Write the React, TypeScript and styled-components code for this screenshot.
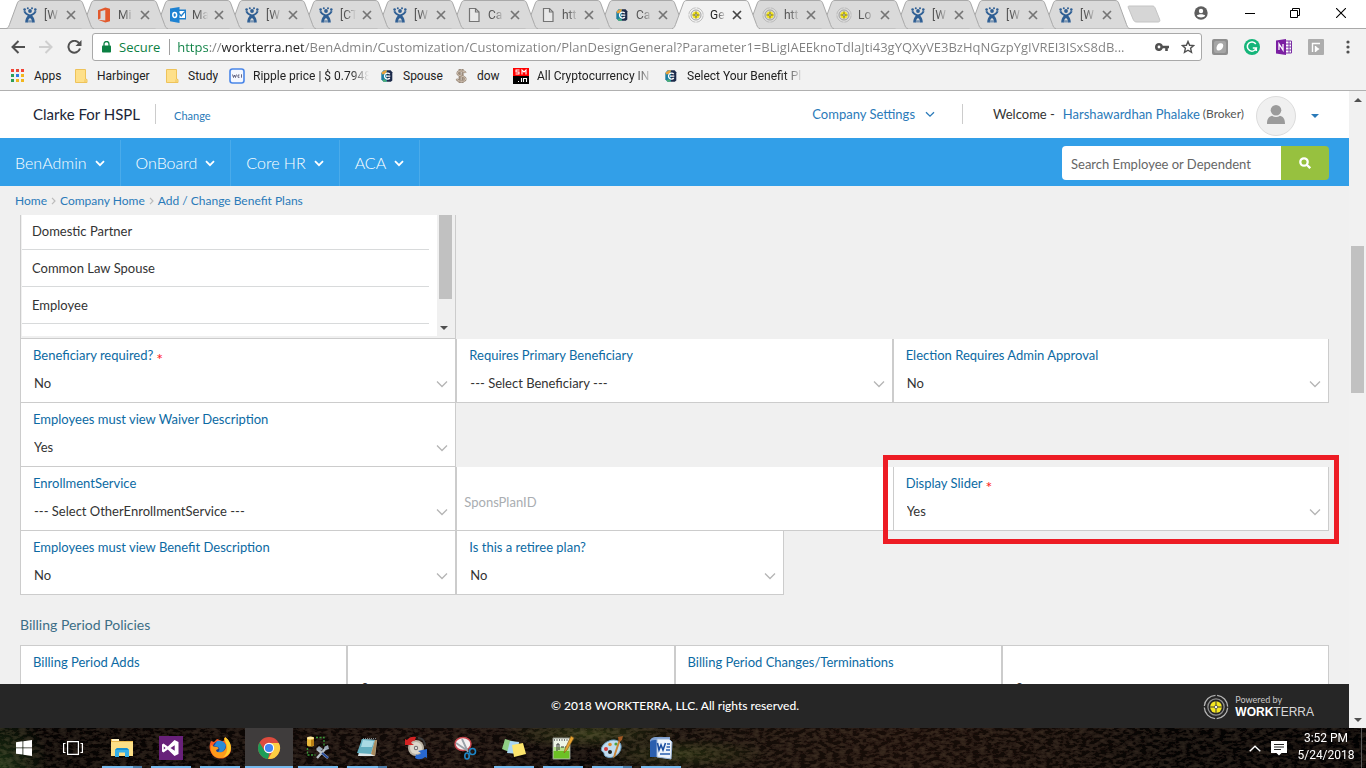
import React from "react";
import styled, { createGlobalStyle, css } from "styled-components";

const GlobalStyle = createGlobalStyle`
  * { box-sizing: border-box; }
  body { margin: 0; background: #f0f0f0; }
  button, input, select { font: inherit; color: inherit; margin: 0; }
  button { border: 0; padding: 0; background: none; cursor: pointer; }
  a { text-decoration: none; color: inherit; }
  svg { display: block; flex: none; }
`;

const uiFont = 'Roboto, "Open Sans", sans-serif';
const pageFont = 'Lato, "Open Sans", sans-serif';
const line = "#cccccc";
const link = "#2a7ab9";

/* ---------- window ---------- */

const Desktop = styled.div`
  display: flex;
  flex-direction: column;
  height: 100vh;
  overflow: hidden;
  font-family: ${uiFont};
`;

const TitleBar = styled.div`
  display: flex;
  height: 29px;
  flex: none;
  background: #fff;
  border-bottom: 1px solid #a9a9a9;
  padding-left: 12px;
`;

const Tab = styled.div<{ $active?: boolean; $order: number }>`
  position: relative;
  z-index: ${(p) => (p.$active ? 40 : p.$order)};
  display: flex;
  align-items: center;
  width: 74px;
  height: 29px;
  flex: none;
  padding-left: 10px;
  color: ${(p) => (p.$active ? "#222" : "#555")};
`;

const TabShape = styled.svg`
  position: absolute;
  left: -6px;
  top: 0;
  z-index: -1;
`;

const TabTitle = styled.button`
  display: flex;
  align-items: center;
  gap: 6px;
  width: 38px;
  overflow: hidden;
  font-size: 12px;
  line-height: 16px;
  white-space: nowrap;
  mask-image: linear-gradient(90deg, #000 28px, transparent 38px);
`;

const TabClose = styled.button`
  display: flex;
  align-items: center;
  justify-content: center;
  width: 22px;
  height: 16px;
`;

const NewTab = styled.button`
  display: flex;
  align-items: center;
  padding-left: 4px;
`;

const WindowButtons = styled.div`
  display: flex;
  align-items: center;
  margin-left: auto;
  padding-right: 1px;
  height: 26px;
`;

const WindowButton = styled.button<{ $w: number }>`
  display: flex;
  align-items: center;
  justify-content: center;
  width: ${(p) => p.$w}px;
  height: 26px;
`;

const Toolbar = styled.div`
  display: flex;
  align-items: center;
  flex: none;
  height: 36px;
  background: #f2f2f2;
  padding: 0 2px 0 4px;
`;

const ToolButton = styled.button<{ $w?: number }>`
  display: flex;
  align-items: center;
  justify-content: center;
  flex: none;
  width: ${(p) => p.$w ?? 28}px;
  height: 28px;
`;

const AddressBox = styled.div`
  display: flex;
  align-items: center;
  flex: 1;
  min-width: 0;
  height: 28px;
  margin-left: 4px;
  margin-right: 2px;
  background: #fff;
  border: 1px solid #a9a9a9;
  border-radius: 3px;
`;

const Secure = styled.span`
  display: flex;
  align-items: center;
  gap: 8px;
  padding: 0 9px;
  color: #0b8043;
  border-right: 1px solid #a0a0a0;
  font-family: "Open Sans", sans-serif;
  font-size: 13px;
  line-height: 16px;
`;

const AddressInput = styled.input`
  flex: 1;
  min-width: 0;
  border: 0;
  outline: 0;
  padding: 0;
  margin-left: 7px;
  height: 24px;
  font-family: "Open Sans", sans-serif;
  font-size: 13px;
  color: transparent;
  background: linear-gradient(
    90deg,
    #0b8043 31px,
    #808080 31px,
    #808080 45px,
    #222 45px,
    #222 127px,
    #808080 127px
  );
  background-clip: text;
  -webkit-background-clip: text;
`;

const Bookmarks = styled.nav`
  display: flex;
  align-items: center;
  flex: none;
  height: 26px;
  padding: 0 10px 4px;
  background: #f2f2f2;
  border-bottom: 1px solid #b0b0b0;
  font-size: 12px;
  line-height: 16px;
  color: #222;
`;

const Bookmark = styled.a<{ $w: number; $fade?: boolean }>`
  display: flex;
  align-items: center;
  gap: 8px;
  width: ${(p) => p.$w}px;
  padding-right: ${(p) => (p.$fade ? 10 : 6)}px;
  flex: none;
  white-space: nowrap;
  span {
    overflow: hidden;
    ${(p) =>
      p.$fade &&
      css`
        flex: 1;
        mask-image: linear-gradient(90deg, #000 84%, transparent);
      `}
  }
`;

/* ---------- web page ---------- */

const Viewport = styled.div`
  display: flex;
  flex: 1;
  min-height: 0;
`;

const Page = styled.div`
  display: flex;
  flex-direction: column;
  flex: 1;
  min-width: 0;
  background: #f0f0f0;
  font-family: ${pageFont};
  font-size: 13px;
  line-height: 20px;
  color: #333;
`;

const Scrollbar = styled.div`
  display: flex;
  flex-direction: column;
  align-items: center;
  flex: none;
  width: 17px;
  background: #f1f1f1;
`;

const ScrollButton = styled.button`
  display: flex;
  align-items: center;
  justify-content: center;
  width: 17px;
  height: 17px;
`;

const ScrollTrack = styled.div`
  flex: 1;
  width: 13px;
  padding-top: 138px;
`;

const ScrollThumb = styled.div<{ $h: number }>`
  width: 13px;
  height: ${(p) => p.$h}px;
  background: #c1c1c1;
`;

const Header = styled.header`
  display: flex;
  align-items: center;
  flex: none;
  height: 47px;
  padding: 0 21px 2px 33px;
  background: #fff;
`;

const Company = styled.span`
  font-size: 15px;
  color: #1c2536;
`;

const Divider = styled.span<{ $before: number; $after: number }>`
  width: 1px;
  height: 20px;
  background: ${line};
  margin: 0 ${(p) => p.$after}px 0 ${(p) => p.$before}px;
`;

const HeaderLink = styled.a`
  display: flex;
  align-items: center;
  gap: 10px;
  color: ${link};
`;

const SmallLink = styled(HeaderLink)`
  font-size: 11px;
  padding-top: 4px;
`;

const Account = styled.div`
  display: flex;
  align-items: center;
  margin-left: auto;
`;

const Welcome = styled.span`
  margin-right: 8px;
`;

const Role = styled.span`
  font-size: 12px;
  color: #555;
  margin: 0 12px 0 3px;
`;

const Avatar = styled.span`
  display: flex;
  align-items: center;
  justify-content: center;
  width: 40px;
  height: 40px;
  margin-top: 5px;
  padding-bottom: 3px;
  border: 1px solid #dcdcdc;
  border-radius: 50%;
  background: #f0f0f0;
`;

const Caret = styled.button`
  display: flex;
  justify-content: center;
  width: 26px;
  margin: 4px 0 0 6px;
`;

const MainNav = styled.nav`
  display: flex;
  align-items: center;
  flex: none;
  height: 48px;
  padding-right: 20px;
  background: #329fe8;
`;

const NavItem = styled.button`
  display: flex;
  align-items: center;
  gap: 8px;
  height: 46px;
  margin-top: 2px;
  padding: 0 15px;
  border-right: 1px solid #4aabea;
  color: #fff;
  font-size: 16px;
  font-weight: 300;
  line-height: 20px;
`;

const Search = styled.form`
  display: flex;
  width: 267px;
  height: 34px;
  margin: 2px 0 0 auto;
  border-radius: 4px;
  overflow: hidden;
`;

const SearchInput = styled.input`
  flex: 1;
  min-width: 0;
  border: 0;
  padding: 2px 9px 0;
  background: #fff;
  &::placeholder { color: #666; opacity: 1; }
`;

const SearchButton = styled.button`
  display: flex;
  align-items: center;
  justify-content: center;
  width: 48px;
  background: #97c13f;
`;

const Crumbs = styled.nav`
  display: flex;
  align-items: center;
  flex: none;
  gap: 4px;
  height: 29px;
  padding: 0 15px;
  font-size: 12px;
  color: ${link};
`;

const Content = styled.main`
  flex: 1;
  min-height: 0;
  overflow: hidden;
  padding: 0 20px;
`;

const ListBox = styled.div`
  display: flex;
  width: calc(100% / 3);
  height: 126px;
  margin-top: -2px;
  padding: 0 3px 2px 1px;
  border: 1px solid ${line};
  border-top: 0;
`;

const ListItems = styled.ul`
  flex: 1;
  margin: 0;
  padding: 0 8px 0 0;
  overflow: hidden;
  list-style: none;
  background: #fff;
`;

const ListItem = styled.li`
  height: 37px;
  padding: 8px 10px 0;
  border-bottom: 1px solid #d8dadb;
`;

const ListScroll = styled.div`
  display: flex;
  flex-direction: column;
  align-items: flex-end;
  justify-content: space-between;
  width: 15px;
`;

const Row = styled.div`
  display: flex;
`;

const Field = styled.div<{ $quarter?: boolean; $marked?: boolean }>`
  position: relative;
  width: ${(p) => (p.$quarter ? "25%" : "calc(100% / 3)")};
  height: 64px;
  padding: 6px 7px 0 12px;
  background: #fff;
  border: 1px solid ${line};
  border-top: 0;
  ${(p) =>
    p.$marked &&
    css`
      &::after {
        content: "";
        position: absolute;
        inset: -12px -11px -14px;
        border: 5px solid #ed1c24;
        pointer-events: none;
      }
    `}
`;

const PlainField = styled(Field)`
  display: flex;
  align-items: center;
  border-right: 0;
  padding: 7px 7px 0;
`;

const PlanInput = styled.input`
  width: 100%;
  border: 0;
  padding: 0;
  background: none;
  &::placeholder { color: #a9adb1; opacity: 1; }
`;

const Label = styled.label`
  display: block;
  height: 20px;
  color: #0c6aa3;
`;

const Required = styled.span`
  color: #ff2020;
  font-size: 16px;
  line-height: 12px;
  vertical-align: -5px;
  margin-left: 3px;
`;

const SelectWrap = styled.div`
  display: flex;
  align-items: center;
  margin-top: 8px;
`;

const Select = styled.select`
  flex: 1;
  min-width: 0;
  appearance: none;
  border: 0;
  outline: 0;
  background: none;
  height: 20px;
  padding: 0 1px;
  margin-right: -12px;
`;

const GroupTitle = styled.h2`
  margin: 20px 0 10px;
  font-size: 14px;
  line-height: 20px;
  font-weight: 400;
  color: #3c6e86;
`;

const BillingRow = styled(Row)`
  border-top: 1px solid ${line};
`;

const UnlabelledField = styled(Field)`
  padding-top: 24px;
`;

const Footer = styled.footer`
  display: grid;
  grid-template-columns: 1fr auto 1fr;
  align-items: center;
  flex: none;
  height: 44px;
  padding: 0 35px 0 36px;
  background: #262626;
  color: #fff;
  font-size: 12px;
`;

const Copyright = styled.span`
  grid-column: 2;
  font-weight: 500;
`;

const Powered = styled.a`
  display: flex;
  align-items: center;
  justify-self: end;
  gap: 6px;
  padding-top: 2px;
`;

const BrandText = styled.span`
  display: flex;
  flex-direction: column;
  font-family: "Liberation Sans", Arial, sans-serif;
  small { font-family: ${pageFont}; font-size: 9px; line-height: 10px; color: #c8c8c8; }
  span { font-size: 12px; line-height: 14px; color: #d8d8d8; }
  b { color: #fff; }
`;

/* ---------- task bar ---------- */

const Taskbar = styled.div`
  position: relative;
  isolation: isolate;
  display: flex;
  flex: none;
  height: 40px;
  color: #fff;
  background:
    radial-gradient(ellipse 50px 60px at 0 40px, #1b3013, transparent),
    radial-gradient(ellipse 90px 16px at 590px 6px, #2c3214, transparent),
    radial-gradient(ellipse 90px 16px at 680px 26px, #252b10, transparent),
    linear-gradient(90deg, #040302 0, #0a0604 14%, #120b08 34%, #080504 42%, #130d08 52%, #170d08 66%, #100a06 78%, #050403 86%, #020202 100%);
`;

const Foliage = styled.svg`
  position: absolute;
  inset: 0;
  z-index: -1;
  width: 100%;
  height: 100%;
  opacity: 0.25;
  mix-blend-mode: screen;
`;

const TaskButton = styled.button<{ $active?: boolean }>`
  position: relative;
  display: flex;
  align-items: center;
  justify-content: center;
  width: 48px;
  height: 40px;
  margin-right: 1px;
  flex: none;
  background: ${(p) => (p.$active ? "#3f3c3c" : "none")};
`;

const RunningBar = styled.span<{ $kind: "one" | "many" | "active" }>`
  position: absolute;
  bottom: 0;
  left: ${(p) => (p.$kind === "active" ? 0 : 4)}px;
  right: ${(p) => (p.$kind === "active" ? 0 : 4)}px;
  height: 2px;
  background: ${(p) => (p.$kind === "many" ? "linear-gradient(90deg, #76b9ed 31px, #4a7ba6 31px)" : "#76b9ed")};
`;

const Tray = styled.div`
  display: flex;
  align-items: center;
  margin-left: auto;
  padding-right: 4px;
`;

const TrayButton = styled.button`
  display: flex;
  align-items: center;
  justify-content: center;
  width: 24px;
  height: 40px;
`;

const Clock = styled.div`
  width: 70px;
  padding-bottom: 2px;
  text-align: center;
  font-size: 12px;
  line-height: 17px;
  white-space: nowrap;
`;

const ShowDesktop = styled.span`
  width: 1px;
  height: 40px;
  background: #555;
`;

/* ---------- icons ---------- */

const Jira = () => (
  <svg width="16" height="16" viewBox="0 0 16 16" fill="#2f5f94">
    <circle cx="2.6" cy="2.6" r="1.3" /><circle cx="5.8" cy="1.3" r="1" /><circle cx="10" cy="1.3" r="1" />
    <circle cx="13.3" cy="2.6" r="1.3" /><circle cx="8" cy="4" r="1.9" />
    <path d="M1.4 4.6c1 2.4 3 3.4 4.4 4.2C4.300 10.300 3.300 12.600 3.200 15.400H5.700c.2-2 .9-3.400 2.300-4.300 1.400.9 2.100 2.300 2.300 4.300h2.500c-.1-2.800-1.100-5.100-2.600-6.600 1.400-.8 3.400-1.800 4.400-4.200l-2-.5C11.900 6 10 7.200 8 7.400 6 7.200 4.100 6 3.400 4.100z" />
    <path d="M5.600 13.200h4.800l.6 2.400H5z" opacity=".55" />
  </svg>
);
const Office = () => (
  <svg width="16" height="16" viewBox="0 0 16 16"><path d="M2 3.300 9.300.5 14 1.800v12.400l-4.700 1.300L2 12.700l7.300.9V3.100L4.500 4.200v7.300L2 12.600z" fill="#e2592c" /></svg>
);
const Outlook = () => (
  <svg width="16" height="16" viewBox="0 0 16 16">
    <path d="M8 2.500h8v10H8z" fill="#1f7ecb" /><path d="M9 4h6v7H9z" fill="#fff" /><path d="m9 6.500 2.200 2.500L15 4.500" fill="none" stroke="#1f7ecb" strokeWidth="1.300" />
    <path d="M0 1.500 9.500 0v16L0 14.300z" fill="#1e82d2" /><ellipse cx="4.700" cy="8" rx="1.900" ry="2.500" fill="none" stroke="#fff" strokeWidth="1.500" />
  </svg>
);
const Doc = () => (
  <svg width="16" height="16" viewBox="0 0 16 16" fill="#e8e8e8" stroke="#747474" strokeWidth="1.200"><path d="M3.500 1.500h6l3.500 3.500v9.500H3.500z" /><path d="M9.500 1.500V5H13" fill="none" /></svg>
);
const Globe = () => (
  <svg width="16" height="16" viewBox="0 0 16 16">
    <path d="M8 2.300H4.500L2.300 5v6.500l2.200 2.200H8z" fill="#1e7ea0" /><path d="M2.500 4.500 6 2.300h2L7 5.500l-3.600 1z" fill="#e9a23b" />
    <path d="M8 2.300h3.600l1.700 1.900v8.300l-1.500 1.200H8z" fill="#1c2b4b" />
    <path d="M10.800 6.100A3 3 0 1 0 10.800 10M7 8.100h4.300" fill="none" stroke="#fff" strokeWidth="1.300" /><path d="M3.500 12 6 11.300l2 2.400H4.500z" fill="#4cae73" />
  </svg>
);
const Target = ({ size = 16 }: { size?: number }) => (
  <svg width={size} height={size} viewBox="0 0 16 16">
    <circle cx="8" cy="8" r="7.200" fill="none" stroke="#b4b4b4" strokeWidth=".8" strokeDasharray="10.300 1" strokeDashoffset="-.5" />
    <circle cx="8" cy="8" r="5" fill="none" stroke="#8f8f8f" strokeWidth=".8" />
    <circle cx="8" cy="8" r="3.600" fill="#f5e722" /><path d="M8 4.400v7.200M4.400 8h7.200" stroke="#333" strokeWidth=".6" />
    <circle cx="8" cy="8" r="1" fill="#fff" stroke="#333" strokeWidth=".4" />
  </svg>
);
const Apps = () => (
  <svg width="16" height="16" viewBox="0 0 16 16">
    {["#f44336", "#e64a3a", "#f44336", "#2e9e57", "#2f7be4", "#f2b61c", "#2e9e57", "#f2b61c", "#f2b61c"].map((c, i) => (
      <rect key={i} x={1 + (i % 3) * 5} y={1 + Math.floor(i / 3) * 5} width="3" height="3" fill={c} />
    ))}
  </svg>
);
const Folder = () => (
  <svg width="16" height="16" viewBox="0 0 16 16"><path d="M2.500 1.500h10v9.500l1.500.5v3H2.500z" fill="#fee08a" stroke="#eec35a" /><path d="M12 11.500v3" stroke="#eec35a" /></svg>
);
const Wci = () => (
  <svg width="16" height="16" viewBox="0 0 16 16"><rect x="1" y="1" width="14" height="14" rx="2.500" fill="#f5f8ff" stroke="#4a86e8" strokeWidth="1.600" /><path d="m3.500 6.500 1 3 1-2.500 1 2.500 1-3M10.500 7H9v2.300h1.500M12.500 6.300v3.400" fill="none" stroke="#446" strokeWidth=".8" /></svg>
);
const Dollar = () => (
  <svg width="16" height="16" viewBox="0 0 16 16" fill="none"><path d="M12.500 5C12 2.500 4.500 2 4.500 5.300S12.500 7.500 12.500 11 4.300 13.700 3.800 10.800M6.700 1v14M9.500 1v14" stroke="#9a8a7a" strokeWidth="2.200" /><path d="M12.500 5C12 2.500 4.500 2 4.500 5.300S12.500 7.500 12.500 11 4.300 13.700 3.800 10.800" stroke="#dccdbd" strokeWidth=".9" /></svg>
);
const SmIn = () => (
  <svg width="16" height="16" viewBox="0 0 16 16"><path fill="#f00" d="M0 0h16v8H0z" /><path fill="#000" d="M0 8h16v8H0z" /><path d="M6.500 2H3v2h3v2H2.500M9 6.500V2l2 2 2-2v4.500M5 13.500h1M8.500 10v4M10.500 14v-3.500h3V14" stroke="#fff" fill="none" strokeWidth="1.100" /></svg>
);
const Chevron = ({ w = 10, color = "#fff", sw = 1.6 }: { w?: number; color?: string; sw?: number }) => (
  <svg width={w} height={w} viewBox="0 0 10 10" fill="none" stroke={color} strokeWidth={sw}><path d="m1 3.200 4 4 4-4" /></svg>
);
const SelectArrow = () => (
  <svg width="12" height="12" viewBox="0 0 12 12" fill="none" stroke="#b5b5b5" strokeWidth="1.300" pointerEvents="none"><path d="m1 4.500 5 5 5-5" /></svg>
);
const Triangle = ({ up, color = "#505050" }: { up?: boolean; color?: string }) => (
  <svg width="8" height="4" viewBox="0 0 8 4" fill={color}><path d={up ? "M0 4h8L4 0z" : "M0 0h8L4 4z"} /></svg>
);

/* ---------- data ---------- */

const tabs: { icon: React.ReactNode; title: string; active?: boolean }[] = [
  { icon: <Jira />, title: "[W" }, { icon: <Office />, title: "Mi" }, { icon: <Outlook />, title: "Ma" },
  { icon: <Jira />, title: "[W" }, { icon: <Jira />, title: "[CT" }, { icon: <Jira />, title: "[W" },
  { icon: <Doc />, title: "Ca" }, { icon: <Doc />, title: "htt" }, { icon: <Globe />, title: "Ca" },
  { icon: <Target />, title: "Ge", active: true }, { icon: <Target />, title: "htt" }, { icon: <Target />, title: "Lo" },
  { icon: <Jira />, title: "[W" }, { icon: <Jira />, title: "[W" }, { icon: <Jira />, title: "[W" },
];

const bookmarks = [
  { icon: <Apps />, text: "Apps", w: 63 },
  { icon: <Folder />, text: "Harbinger", w: 91 },
  { icon: <Folder />, text: "Study", w: 65 },
  { icon: <Wci />, text: "Ripple price | $ 0.7948", w: 150, fade: true },
  { icon: <Globe />, text: "Spouse", w: 74 },
  { icon: <Dollar />, text: "dow", w: 60 },
  { icon: <SmIn />, text: "All Cryptocurrency IN", w: 150, fade: true },
  { icon: <Globe />, text: "Select Your Benefit Pl", w: 150, fade: true },
];

const taskIcons: { name: string; run?: "one" | "many" | "active"; icon: React.ReactNode }[] = [
  { name: "Start", icon: <svg width="16" height="16" viewBox="0 0 16 16" fill="#fff"><path d="M0 2.200 6.500 1.300v6.200H0zM7.300 1.200 16 0v7.500H7.300zM0 8.300h6.500v6.300L0 13.700zM7.300 8.300H16V16l-8.700-1.200z" /></svg> },
  { name: "Task view", icon: <svg width="20" height="14" viewBox="0 0 20 14" fill="none" stroke="#fff" strokeWidth="1.200"><path d="M4.600.6h10.800v12.800H4.600zM2.500 2.500H.6v9h1.900M17.500 2.500h1.900v9h-1.900" /></svg> },
  { name: "File Explorer", run: "many", icon: <svg width="24" height="22" viewBox="0 0 24 22"><path d="M1 2h7l1.500 2H23v15H1z" fill="#e9b94f" /><path d="M2 2h7v2H2z" fill="#fff3c4" /><path d="M1 5h22v14H1z" fill="#fcdf86" /><path d="M5 20v-7l2-2h10l2 2v7h-4v-4.500H9V20z" fill="#35b1ea" /><path d="M7 11h10l2 2H5z" fill="#1790d0" /></svg> },
  { name: "Visual Studio", run: "one", icon: <svg width="24" height="24" viewBox="0 0 24 24"><path d="M0 0h24v24H0z" fill="#68217a" /><path fillRule="evenodd" d="m3 8.500 1.500-.9 4.300 3 6.700-6.600L19.500 6v12l-4 2-6.700-6.600-4.300 3L3 15.500zm1.800 1.900v3.200L6.600 12zm10.900-1.200L11.500 12l4.200 2.800z" fill="#fff" /></svg> },
  { name: "Firefox", run: "one", icon: <svg width="24" height="24" viewBox="0 0 24 24"><path d="M3 5c-3 6-1 13 4 16 6 3.500 13 1 15.500-5C24 11 22 5 17 1c1 3-1 4-3 4L9 3 6 6z" fill="#ff5a1f" /><circle cx="11.500" cy="12" r="7" fill="#1c3f94" /><path d="M9 5c4-1 7 0 9 4-1 6-5 9-9 8 3-2 3-5 1-6L6 10z" fill="#2a8bd8" /><path d="M3 9c2 1 3 2 6 2 2 .5 2 2 0 2.500-1.500.5-1 2 .5 2.500 5 1.500 9-2 8.500-7-.3-3-2.500-4.500-2-7.500C22 6 23.500 11 21.500 16 19 22 11 24 6 20 3 17 2 13 3 9z" fill="#ff9a1a" /><path d="M17 1c4.500 3 7 8 5.500 14-1.500 4-4.500 6-7.500 6.500C20 17 20 11 18 7c-1-2-1.500-4-1-6z" fill="#ffd02e" /></svg> },
  { name: "Chrome", run: "active", icon: <svg width="24" height="24" viewBox="0 0 24 24"><circle cx="12" cy="12" r="11" fill="#dd4b3e" /><path d="M2.500 6.500 8 15.500l4.500 1L11 23A11 11 0 0 1 2.500 6.500z" fill="#1c9d57" /><path d="M12 7h9.800A11 11 0 0 1 11 23l5.500-9z" fill="#fdce42" /><circle cx="12" cy="12" r="5.200" fill="#fff" /><circle cx="12" cy="12" r="4.100" fill="#4285f4" /></svg> },
  { name: "SQL Server tools", run: "one", icon: <svg width="24" height="24" viewBox="0 0 24 24"><path d="M1 2v7c0 2 7 2 7 0V2z" fill="#e9b93a" /><path d="M5 2v8c1.500 0 3-.4 3-1V2z" fill="#b97e14" /><ellipse cx="4.500" cy="2" rx="3.500" ry="1.500" fill="#ffe89a" /><path d="M10 1.500h8v8M1.500 12v7h8" fill="none" stroke="#3a9a3a" strokeWidth="1.300" strokeDasharray="2 1.500" /><path d="m11 13 11 9M21 11 11 22" stroke="#b8c0c8" strokeWidth="2.400" /><path d="m10 13 3-3 4 3-2 2M18 11l4-2 1 4-3 1" fill="#9ba9b7" /><path d="m16 17 6 5" stroke="#2a4d9a" strokeWidth="2" /></svg> },
  { name: "Notepad", run: "many", icon: <svg width="24" height="24" viewBox="0 0 24 24"><path d="m7 3 15 1-2 16-17 0z" fill="#dce6e9" /><path d="m7 3 13 1-4 14-14-1z" fill="#63aebf" /><path d="m8 4 11 1-2 6-11 0z" fill="#a9dae4" /><path d="M8 2.500h13" stroke="#7b8286" strokeDasharray="1 1" /><path d="m16 18 4 2 2-16-2 0z" fill="#a88a5e" /></svg> },
  { name: "Sync", icon: <svg width="24" height="24" viewBox="0 0 24 24"><circle cx="12" cy="12" r="8" fill="#b9b2a4" /><circle cx="12" cy="12" r="6" fill="#ddd8cc" /><circle cx="12" cy="12" r="2.200" fill="#777" /><circle cx="12" cy="12" r="1" fill="#fff" /><path d="M1 3l2 1C5 1 9 0 12 1l-1 3.500C9 4.500 7.500 5.500 7 7l3 2H1z" fill="#d12222" /><path d="M23 22l-2-1c-3 2.500-7 3-10 1l1-3.500c2 .5 4 0 5-1.500l-3-2 9-2z" fill="#2868d0" /><path d="M14 2c5 0 7 4 7 8" fill="none" stroke="#3a3a3a" strokeWidth="2" /></svg> },
  { name: "Snipping tool", icon: <svg width="24" height="24" viewBox="0 0 24 24"><ellipse cx="10" cy="8" rx="8" ry="6.500" fill="#f4f0f0" stroke="#c8484f" strokeWidth="1.500" /><path d="M3 7l12 8M9 3l6 13" stroke="#9aa1a8" strokeWidth="1.800" /><circle cx="19.500" cy="15.500" r="3" fill="none" stroke="#1e86c8" strokeWidth="1.600" /><ellipse cx="14" cy="20" rx="2.200" ry="3" fill="none" stroke="#1e86c8" strokeWidth="1.600" /></svg> },
  { name: "Sticky notes", run: "one", icon: <svg width="24" height="24" viewBox="0 0 24 24"><path d="m3 3 10 3-3 11L0 13z" fill="#8fce84" /><path d="m8 5 9 1-1 12-11-1z" fill="#a9d6f2" /><path d="m10 9 11-2 3 11-12 3z" fill="#fbe46c" /></svg> },
  { name: "Notepad++", run: "one", icon: <svg width="24" height="24" viewBox="0 0 24 24"><path d="M2 2h17v21H2z" fill="#eef5e6" stroke="#8a8f88" /><path d="M2.500 15h16v7.500h-16z" fill="#6cc024" /><path d="M2.500 11h16v4h-16z" fill="#b5e08a" /><path d="M3 4h15" stroke="#777" strokeDasharray="1 1.500" strokeWidth="2" /><path d="M6 8v7M6 8h2v6M10 11h3M14 11h3" stroke="#333" fill="none" /><path d="m20 0 3 2-7 12-3 3 1-4z" fill="#e8a431" stroke="#7c5b20" strokeWidth=".6" /></svg> },
  { name: "Paint", run: "many", icon: <svg width="24" height="24" viewBox="0 0 24 24"><path d="M9 5c7-3 13 1 12 7-1 7-9 11-14 9-4-1-2-4-4-5-4-2 0-9 6-11z" fill="#bfdcf0" stroke="#6d9fc4" /><circle cx="6" cy="13" r="2" fill="#d63c3c" /><circle cx="10" cy="8.500" r="1.800" fill="#e08a2e" /><circle cx="16" cy="8" r="1.600" fill="#4aa347" /><circle cx="10" cy="16" r="2" fill="#222" /><path d="M21 3 15 21l-2 1 1-4 5-15z" fill="#c98436" /><path d="m18 1 5-1-1 4-3 2z" fill="#a45a24" /></svg> },
  { name: "Word", run: "one", icon: <svg width="24" height="24" viewBox="0 0 24 24"><path d="M1 4c2-4 8-3 9-3h11v3H9v17H1z" fill="#7f9fd0" /><path d="M1 6c1-2 4-2 7-2v17H1z" fill="#2b5fae" /><path d="M8 3h12l3 3-1 17-14-2z" fill="#eef4fb" stroke="#9bb5d8" /><path d="M18 8h3M17.500 11h3.500M17 14h4M11 18h10" stroke="#2b5fae" strokeWidth="1.400" /><path d="m8.500 7 1.500 7 2-5 2 5 2.500-7" fill="none" stroke="#1c4fa0" strokeWidth="1.600" /></svg> },
];

/* ---------- form parts ---------- */

type SelectFieldProps = { id: string; label: string; value: string; required?: boolean; quarter?: boolean; marked?: boolean };

const SelectField = ({ id, label, value, required, quarter, marked }: SelectFieldProps) => (
  <Field $quarter={quarter} $marked={marked}>
    <Label htmlFor={id}>{label}{required && <Required>*</Required>}</Label>
    <SelectWrap>
      <Select id={id}><option>{value}</option></Select>
      <SelectArrow />
    </SelectWrap>
  </Field>
);

const BrowserWindow = () => (
  <>
    <TitleBar>
      {tabs.map((t, i) => (
        <Tab key={i} $active={t.active} $order={tabs.length - i}>
          <TabShape width="88" height="29" viewBox="0 0 88 29">
            <path d="M0 28.500c2 0 2.500-1.500 3.500-4L11 4C12 1 13 .5 15 .5h58c2 0 3 .5 4 3.500l7.500 20.500c1 2.500 1.500 4 3.500 4" fill={t.active ? "#f2f2f2" : "#dadada"} stroke="#a9a9a9" />
            {t.active && <path d="M1.500 28.500h85" stroke="#f2f2f2" strokeWidth="1.200" />}
          </TabShape>
          <TabTitle>{t.icon}<span>{t.title}</span></TabTitle>
          <TabClose aria-label="Close tab">
            <svg width="10" height="10" viewBox="0 0 10 10" stroke={t.active ? "#444" : "#757575"} strokeWidth="1.700"><path d="m1 1 8 8M9 1 1 9" /></svg>
          </TabClose>
        </Tab>
      ))}
      <NewTab aria-label="New tab">
        <svg width="36" height="18" viewBox="0 0 36 18"><path d="M3 1h23c2 0 2.500.5 3.500 3l4 10c.8 2 .3 3-1.500 3H11c-2 0-3-.5-4-3L2.500 3C2 1.800 2 1 3 1z" fill="#d6d6d6" stroke="#c4c4c4" /></svg>
      </NewTab>
      <WindowButtons>
        <WindowButton $w={50} aria-label="Profile">
          <svg width="14" height="14" viewBox="0 0 14 14"><circle cx="7" cy="7" r="6.700" fill="#5e5e5e" /><circle cx="7" cy="5" r="2.200" fill="#fff" /><path d="M2.800 9.800C4 7.800 10 7.800 11.200 9.800 9.500 12 4.500 12 2.800 9.800z" fill="#fff" /></svg>
        </WindowButton>
        <WindowButton $w={47} aria-label="Minimize"><svg width="10" height="10"><path d="M0 5.500h10" stroke="#000" /></svg></WindowButton>
        <WindowButton $w={44} aria-label="Restore"><svg width="10" height="10" fill="none" stroke="#000"><path d="M.5 2.500h7v7h-7zM2.500 2.500v-2h7v7h-2" /></svg></WindowButton>
        <WindowButton $w={48} aria-label="Close"><svg width="10" height="10" stroke="#000" strokeWidth="1.100"><path d="m0 0 10 10M10 0 0 10" /></svg></WindowButton>
      </WindowButtons>
    </TitleBar>
    <Toolbar>
      <ToolButton aria-label="Back"><svg width="14" height="14" viewBox="0 0 14 14" fill="none" stroke="#505050" strokeWidth="2"><path d="M14 7H2M7.500 1 1.500 7l6 6" /></svg></ToolButton>
      <ToolButton aria-label="Forward"><svg width="14" height="14" viewBox="0 0 14 14" fill="none" stroke="#cfcfcf" strokeWidth="2"><path d="M0 7h12M6.500 1l6 6-6 6" /></svg></ToolButton>
      <ToolButton aria-label="Reload"><svg width="15" height="14" viewBox="0 0 15 14" fill="none" stroke="#505050" strokeWidth="2"><path d="M12.300 3.500A5.900 5.900 0 1 0 13 8.500" /><path d="M14.500 0v6h-6z" fill="#505050" stroke="none" /></svg></ToolButton>
      <AddressBox>
        <Secure>
          <svg width="9" height="12" viewBox="0 0 9 12"><rect y="4.500" width="9" height="7" rx=".8" fill="#0b8043" /><path d="M2 5V3a2.500 2.500 0 0 1 5 0v2" fill="none" stroke="#0b8043" strokeWidth="1.300" /></svg>
          Secure
        </Secure>
        <AddressInput aria-label="Address" defaultValue="https://workterra.net/BenAdmin/Customization/Customization/PlanDesignGeneral?Parameter1=BLigIAEEknoTdlaJti43gYQXyVE3BzHqNGzpYgIVREI3ISxS8dB..." />
        <ToolButton $w={26} aria-label="Saved password"><svg width="14" height="8" viewBox="0 0 14 8" fill="#505050"><path fillRule="evenodd" d="M4 0a4 4 0 0 1 3.800 2.800H14v2.500h-1.200V8h-2.600V5.300H7.800A4 4 0 1 1 4 0zm0 2.600a1.400 1.400 0 1 0 0 2.800 1.400 1.400 0 0 0 0-2.800z" /></svg></ToolButton>
        <ToolButton $w={26} aria-label="Bookmark this page"><svg width="14" height="14" viewBox="0 0 14 14" fill="none" stroke="#505050" strokeWidth="1.400"><path d="m7 1.500 1.600 3.800 4 .3-3 2.700.9 4L7 10.200l-3.500 2.100.9-4-3-2.700 4-.3z" /></svg></ToolButton>
      </AddressBox>
      <ToolButton $w={32} aria-label="Recorder"><svg width="16" height="16" viewBox="0 0 16 16"><rect width="16" height="16" rx="2" fill="#8e8e8e" /><rect x="2" y="2" width="12" height="12" rx="2" fill="#a6a6a6" /><path d="M7 4.500c3-1 5 0 4 3.500-1 3-4 4.500-6 3-1.200-2 0-5.500 2-6.500z" fill="#fff" /></svg></ToolButton>
      <ToolButton $w={32} aria-label="Grammarly"><svg width="16" height="16" viewBox="0 0 16 16"><circle cx="8" cy="8" r="8" fill="#15b57a" /><path d="M11.800 5A4.600 4.600 0 1 0 12.300 9H8.800M12.300 9v3" fill="none" stroke="#fff" strokeWidth="1.500" /></svg></ToolButton>
      <ToolButton $w={32} aria-label="OneNote"><svg width="16" height="16" viewBox="0 0 16 16"><path d="M9 2h6.500v12H9z" fill="#fff" stroke="#7b2fa5" /><path d="M10 5h5M10 8h5M10 11h5M13 2v12" stroke="#7b2fa5" /><path d="M0 1.500 10 0v16L0 14.500z" fill="#7b1fa2" /><path d="M3 11V5l4 6V5" fill="none" stroke="#fff" strokeWidth="1.300" /></svg></ToolButton>
      <ToolButton $w={32} aria-label="Extension"><svg width="16" height="16" viewBox="0 0 16 16"><rect width="16" height="16" rx="1" fill="#adadad" /><path d="M4.500 13V4.500H12M7.500 13V7" fill="none" stroke="#fff" strokeWidth="1.400" /><path d="m8 7.500 3.500 2.500L8 12.500z" fill="#fff" /></svg></ToolButton>
      <ToolButton $w={32} aria-label="Menu"><svg width="4" height="14" fill="#505050"><circle cx="2" cy="2" r="1.600" /><circle cx="2" cy="7" r="1.600" /><circle cx="2" cy="12" r="1.600" /></svg></ToolButton>
    </Toolbar>
    <Bookmarks aria-label="Bookmarks">
      {bookmarks.map((b) => (
        <Bookmark key={b.text} href="#" $w={b.w} $fade={b.fade}>{b.icon}<span>{b.text}</span></Bookmark>
      ))}
    </Bookmarks>
  </>
);

const PageHeader = () => (
  <>
    <Header>
      <Company>Clarke For HSPL</Company>
      <Divider $before={15} $after={18} />
      <SmallLink href="#">Change</SmallLink>
      <Account>
        <HeaderLink href="#">Company Settings<Chevron color={link} sw={1.3} /></HeaderLink>
        <Divider $before={27} $after={30} />
        <Welcome>Welcome -</Welcome>
        <HeaderLink href="#">Harshawardhan Phalake</HeaderLink>
        <Role>(Broker)</Role>
        <Avatar>
          <svg width="18" height="19" viewBox="0 0 18 19" fill="#9b9b9b"><circle cx="9" cy="5.300" r="5.300" /><path d="M0 19c0-5 1.500-7 5-8.200 2.500 1.700 5.500 1.700 8 0 3.500 1.200 5 3.200 5 8.200z" /></svg>
        </Avatar>
        <Caret aria-label="Account menu"><Triangle color={link} /></Caret>
      </Account>
    </Header>
    <MainNav>
      {["BenAdmin", "OnBoard", "Core HR", "ACA"].map((n) => (
        <NavItem key={n}>{n}<Chevron sw={1.8} /></NavItem>
      ))}
      <Search onSubmit={(e) => e.preventDefault()}>
        <SearchInput aria-label="Search" placeholder="Search Employee or Dependent" />
        <SearchButton aria-label="Search"><svg width="12" height="12" viewBox="0 0 12 12" fill="none" stroke="#fff" strokeWidth="2.300"><circle cx="5" cy="5" r="3.700" /><path d="m7.800 7.800 3.400 3.400" /></svg></SearchButton>
      </Search>
    </MainNav>
    <Crumbs aria-label="Breadcrumb">
      <a href="#">Home</a>
      <svg width="5" height="8" viewBox="0 0 5 8" fill="none" stroke="#bbb" strokeWidth="1.200"><path d="m1 .8 3 3.200-3 3.200" /></svg>
      <a href="#">Company Home</a>
      <svg width="5" height="8" viewBox="0 0 5 8" fill="none" stroke="#bbb" strokeWidth="1.200"><path d="m1 .8 3 3.200-3 3.200" /></svg>
      <a href="#">Add / Change Benefit Plans</a>
    </Crumbs>
  </>
);

export default function App() {
  return (
    <Desktop>
      <GlobalStyle />
      <BrowserWindow />
      <Viewport>
        <Page>
          <PageHeader />
          <Content>
            <ListBox>
              <ListItems>
                <ListItem>Domestic Partner</ListItem>
                <ListItem>Common Law Spouse</ListItem>
                <ListItem>Employee</ListItem>
              </ListItems>
              <ListScroll>
                <ScrollThumb $h={86} />
                <ScrollButton aria-label="Scroll list down"><Triangle /></ScrollButton>
              </ListScroll>
            </ListBox>
            <Row>
              <SelectField id="beneficiary" label="Beneficiary required?" required value="No" />
              <SelectField id="primary" label="Requires Primary Beneficiary" value="--- Select Beneficiary ---" />
              <SelectField id="approval" label="Election Requires Admin Approval" value="No" />
            </Row>
            <Row>
              <SelectField id="waiver" label="Employees must view Waiver Description" value="Yes" />
            </Row>
            <Row>
              <SelectField id="service" label="EnrollmentService" value="--- Select OtherEnrollmentService ---" />
              <PlainField><PlanInput aria-label="SponsPlanID" placeholder="SponsPlanID" /></PlainField>
              <SelectField id="slider" label="Display Slider" required marked value="Yes" />
            </Row>
            <Row>
              <SelectField id="benefit" label="Employees must view Benefit Description" value="No" />
              <SelectField id="retiree" label="Is this a retiree plan?" quarter value="No" />
            </Row>
            <GroupTitle>Billing Period Policies</GroupTitle>
            <BillingRow>
              <SelectField id="adds" label="Billing Period Adds" quarter value="" />
              <UnlabelledField $quarter><SelectWrap><Select aria-label="Adds day"><option>0</option></Select></SelectWrap></UnlabelledField>
              <SelectField id="changes" label="Billing Period Changes/Terminations" quarter value="" />
              <UnlabelledField $quarter><SelectWrap><Select aria-label="Changes day"><option>0</option></Select></SelectWrap></UnlabelledField>
            </BillingRow>
          </Content>
          <Footer>
            <Copyright>© 2018 WORKTERRA, LLC. All rights reserved.</Copyright>
            <Powered href="#">
              <Target size={26} />
              <BrandText><small>Powered by</small><span><b>WORK</b>TERRA</span></BrandText>
            </Powered>
          </Footer>
        </Page>
        <Scrollbar>
          <ScrollButton aria-label="Scroll up"><Triangle up /></ScrollButton>
          <ScrollTrack><ScrollThumb $h={147} /></ScrollTrack>
          <ScrollButton aria-label="Scroll down"><Triangle /></ScrollButton>
        </Scrollbar>
      </Viewport>
      <Taskbar>
        <Foliage aria-hidden="true">
          <filter id="leaves"><feTurbulence type="fractalNoise" baseFrequency="0.15 0.3" numOctaves="3" seed="4" /><feColorMatrix values="0.8 0 0 0 -0.34  0.5 0 0 0 -0.22  0.3 0 0 0 -0.13  0 0 0 0 1" /></filter>
          <rect width="100%" height="100%" filter="url(#leaves)" />
        </Foliage>
        {taskIcons.map((t) => (
          <TaskButton key={t.name} aria-label={t.name} $active={t.run === "active"}>
            {t.icon}
            {t.run && <RunningBar $kind={t.run} />}
          </TaskButton>
        ))}
        <Tray>
          <TrayButton aria-label="Show hidden icons"><svg width="12" height="7" fill="none" stroke="#fff" strokeWidth="1.400"><path d="m.7 6.300 5.300-5 5.300 5" /></svg></TrayButton>
          <TrayButton aria-label="Notifications"><svg width="16" height="16" viewBox="0 0 16 16"><path d="M0 1h16v12h-5.500L8 15.500 5.500 13H0z" fill="#fff" /><path d="M3 4.500h10M3 7h10M3 9.500h7" stroke="#222" /></svg></TrayButton>
          <Clock>3:52 PM<br />5/24/2018</Clock>
          <ShowDesktop />
        </Tray>
      </Taskbar>
    </Desktop>
  );
}
